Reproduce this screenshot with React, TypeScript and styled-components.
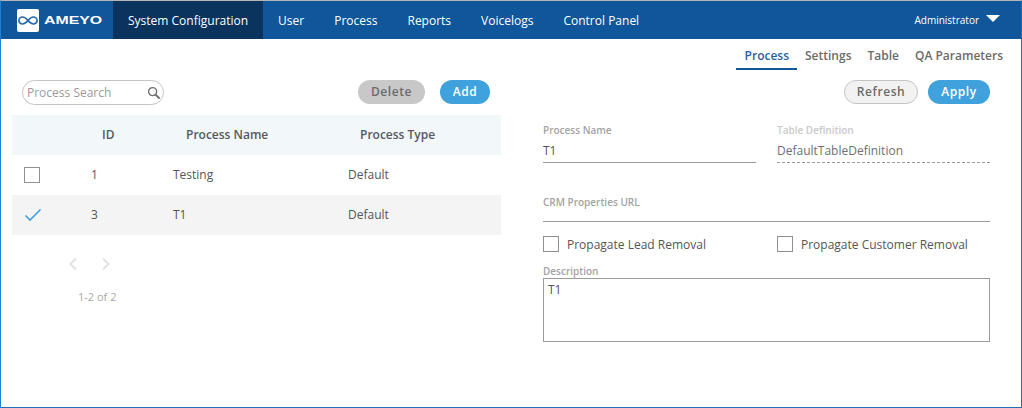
import React from "react";
import styled, { createGlobalStyle } from "styled-components";

const Global = createGlobalStyle`
  html, body { margin: 0; padding: 0; background: #fff; }
  body { font-family: "Open Sans", "Liberation Sans", sans-serif; }
  * { box-sizing: border-box; }
`;

const Frame = styled.div`
  width: 1022px; height: 408px; display: flex; flex-direction: column;
  border-top: 1px solid #b5b5b5; border-left: 1px solid #1e82d2;
  border-right: 1px solid #1e6fb8; border-bottom: 1px solid #1e6fb8; overflow: hidden;
`;
const Header = styled.header`
  height: 38px; flex: none; background: #10569b; display: flex; align-items: stretch; color: #fff;
`;
const LogoBox = styled.div`
  width: 112px; flex: none; display: flex; align-items: center; padding-left: 16px; gap: 5px;
`;
const LogoText = styled.span`
  font-family: "Liberation Sans", sans-serif; font-weight: 700; font-size: 11.5px; transform: scaleX(1.38); transform-origin: left center;
`;
const Nav = styled.nav`display: flex; align-items: stretch;`;
const NavItem = styled.div<{ $active?: boolean }>`
  display: flex; align-items: center; font-size: 12px; padding: 0 15px; white-space: nowrap;
  background: ${p => (p.$active ? "#0a335d" : "transparent")};
`;
const UserBox = styled.div`
  margin-left: auto; display: flex; align-items: center; gap: 7px; padding-right: 21px; font-size: 10px;
`;
const Caret = styled.span`
  width: 0; height: 0; border-left: 7px solid transparent; border-right: 7px solid transparent; border-top: 7px solid #fff; margin-top: -3px;
`;
const Tabs = styled.div`
  height: 31px; flex: none; display: flex; justify-content: flex-end; padding-right: 10px; padding-top: 9px;
`;
const Tab = styled.div<{ $active?: boolean }>`
  font-size: 12px; font-weight: 600; line-height: 16px; padding: 0 8px; height: 22px; white-space: nowrap;
  color: ${p => (p.$active ? "#2a6199" : "#6b6b6b")};
  border-bottom: 2px solid ${p => (p.$active ? "#10569b" : "transparent")};
  ${p => p.$active && "padding: 0 8px 0 9px;"}
`;
const Body = styled.main`
  flex: 1; display: grid; grid-template-columns: 500px 1fr; padding-left: 11px; padding-top: 10px;
`;
const Left = styled.section`width: 489px; display: flex; flex-direction: column;`;
const Toolbar = styled.div`
  height: 25px; display: flex; align-items: flex-start; padding-left: 10px;
`;
const Search = styled.div`
  width: 142px; height: 25px; border: 1px solid #c4c4c4; border-radius: 13px; display: flex; align-items: center;
  justify-content: space-between; padding: 0 2px 0 4px; font-size: 12px; color: #9a9a9a; margin-right: 194px;
`;
const Btn = styled.div<{ $kind: "gray" | "blue" | "outline"; $w: number }>`
  height: 24px; width: ${p => p.$w}px; border-radius: 12px; display: flex; align-items: center; justify-content: center;
  font-size: 12px; font-weight: 600; letter-spacing: 0.6px; flex: none; padding-bottom: 1px;
  background: ${p => (p.$kind === "gray" ? "#c8c8c8" : p.$kind === "blue" ? "#3fa2dc" : "#f2f2f2")};
  color: ${p => (p.$kind === "blue" ? "#fff" : "#6b6b6b")};
  border: ${p => (p.$kind === "outline" ? "1px solid #c4c4c4" : "none")};
`;
const AddBtn = styled(Btn)`margin-left: 15px;`;
const Table = styled.div`margin-top: 10px; display: flex; flex-direction: column;`;
const Row = styled.div<{ $bg?: string; $head?: boolean }>`
  height: 40px; display: grid; grid-template-columns: 79px 82px 175px 1fr; align-items: center; padding-bottom: 1px;
  background: ${p => p.$bg || "#fff"}; font-size: 12px; color: #555;
  ${p => p.$head && "font-weight: 600; color: #58585f;"}
`;
const HeadCell = styled.div<{ $pad: number }>`padding-left: ${p => p.$pad}px; white-space: nowrap;`;
const Cell = styled.div`white-space: nowrap;`;
const CheckCell = styled.div`padding-left: 12px; display: flex; align-items: center;`;
const Box = styled.span`
  width: 16px; height: 16px; border: 1px solid #8f8f8f; display: inline-block; flex: none;
`;
const Pager = styled.div`
  margin-top: 20px; padding-left: 56px; display: flex; gap: 23px; height: 18px; align-items: center;
`;
const PagerCount = styled.div`
  margin-top: 16px; padding-left: 66px; font-size: 11px; color: #a8a8a8; line-height: 16px;
`;
const Right = styled.section`display: flex; flex-direction: column; padding-left: 31px; width: 510px;`;
const RightBar = styled.div`height: 25px; display: flex; justify-content: flex-end; gap: 10px; width: 447px;`;
const FormRow = styled.div`display: grid; grid-template-columns: 213px 213px; column-gap: 21px; width: 447px;`;
const Field = styled.div`display: flex; flex-direction: column;`;
const Label = styled.label<{ $faded?: boolean }>`
  font-size: 10px; font-weight: 600; line-height: 14px; color: ${p => (p.$faded ? "#c9c9c9" : "#a3a3a3")};
`;
const Value = styled.div<{ $dashed?: boolean; $muted?: boolean }>`
  height: 26px; padding-top: 4px; font-size: 12px; line-height: 20px; color: ${p => (p.$muted ? "#6f6f6f" : "#555")};
  border-bottom: 1px ${p => (p.$dashed ? "dashed" : "solid")} #9b9b9b;
`;
const Top = styled(FormRow)`margin-top: 18px;`;
const Crm = styled(Field)`margin-top: 32px; width: 447px;`;
const CrmLine = styled.div`height: 13px; border-bottom: 1px solid #9b9b9b;`;
const Checks = styled(FormRow)`margin-top: 13px;`;
const CheckRow = styled.div`display: flex; align-items: center; gap: 8px; font-size: 12px; color: #555; height: 18px;`;
const DescField = styled(Field)`margin-top: 11px; width: 447px;`;
const DescBox = styled.div`
  height: 64px; border: 1px solid #9b9b9b; font-size: 12px; color: #555; padding: 3px 4px; line-height: 16px;
`;

const Logo = () => (
  <svg width="22" height="23" viewBox="0 0 22 23">
    <rect width="22" height="23" rx="2" fill="#fff" />
    <path d="M11 11.5C8.6 8.4 7.2 8 5.4 8A3.5 3.5 0 0 0 5.4 15C7.2 15 8.6 14.6 11 11.5C13.4 8.4 14.8 8 16.6 8A3.5 3.5 0 0 1 16.6 15C14.8 15 13.4 14.6 11 11.5Z" fill="none" stroke="#2a6aa8" strokeWidth="1.7" />
  </svg>
);
const SearchIcon = () => (
  <svg width="14" height="14" viewBox="0 0 14 14" fill="none">
    <circle cx="5.6" cy="5.6" r="4" stroke="#6f6f6f" strokeWidth="1.4" />
    <path d="M8.6 8.6L12 12" stroke="#6f6f6f" strokeWidth="2" strokeLinecap="round" />
  </svg>
);
const Check = () => (
  <svg width="18" height="14" viewBox="0 0 18 14" fill="none">
    <path d="M1.5 7.5L6 12L16.5 1.5" stroke="#3fa2dc" strokeWidth="1.6" />
  </svg>
);
const Chevron = ({ dir }: { dir: "l" | "r" }) => (
  <svg width="10" height="14" viewBox="0 0 10 14" fill="none">
    <path d={dir === "l" ? "M8 1.5L2.5 7L8 12.5" : "M2 1.5L7.5 7L2 12.5"} stroke="#e3e3e3" strokeWidth="2" />
  </svg>
);

export default function App() {
  return (
    <Frame>
      <Global />
      <Header>
        <LogoBox><Logo /><LogoText>AMEYO</LogoText></LogoBox>
        <Nav>
          <NavItem $active>System Configuration</NavItem>
          <NavItem>User</NavItem>
          <NavItem>Process</NavItem>
          <NavItem>Reports</NavItem>
          <NavItem>Voicelogs</NavItem>
          <NavItem>Control Panel</NavItem>
        </Nav>
        <UserBox>Administrator<Caret /></UserBox>
      </Header>
      <Tabs>
        <Tab $active>Process</Tab>
        <Tab>Settings</Tab>
        <Tab>Table</Tab>
        <Tab>QA Parameters</Tab>
      </Tabs>
      <Body>
        <Left>
          <Toolbar>
            <Search>Process Search<SearchIcon /></Search>
            <Btn $kind="gray" $w={67}>Delete</Btn>
            <AddBtn $kind="blue" $w={50}>Add</AddBtn>
          </Toolbar>
          <Table>
            <Row $bg="#f2f7fa" $head>
              <span />
              <HeadCell $pad={11}>ID</HeadCell>
              <HeadCell $pad={13}>Process Name</HeadCell>
              <HeadCell $pad={12}>Process Type</HeadCell>
            </Row>
            <Row>
              <CheckCell><Box /></CheckCell>
              <Cell>1</Cell>
              <Cell>Testing</Cell>
              <Cell>Default</Cell>
            </Row>
            <Row $bg="#f4f4f4">
              <CheckCell><Check /></CheckCell>
              <Cell>3</Cell>
              <Cell>T1</Cell>
              <Cell>Default</Cell>
            </Row>
          </Table>
          <Pager><Chevron dir="l" /><Chevron dir="r" /></Pager>
          <PagerCount>1-2 of 2</PagerCount>
        </Left>
        <Right>
          <RightBar>
            <Btn $kind="outline" $w={74}>Refresh</Btn>
            <Btn $kind="blue" $w={62}>Apply</Btn>
          </RightBar>
          <Top>
            <Field><Label>Process Name</Label><Value>T1</Value></Field>
            <Field><Label $faded>Table Definition</Label><Value $dashed $muted>DefaultTableDefinition</Value></Field>
          </Top>
          <Crm><Label>CRM Properties URL</Label><CrmLine /></Crm>
          <Checks>
            <CheckRow><Box />Propagate Lead Removal</CheckRow>
            <CheckRow><Box />Propagate Customer Removal</CheckRow>
          </Checks>
          <DescField><Label>Description</Label><DescBox>T1</DescBox></DescField>
        </Right>
      </Body>
    </Frame>
  );
}
